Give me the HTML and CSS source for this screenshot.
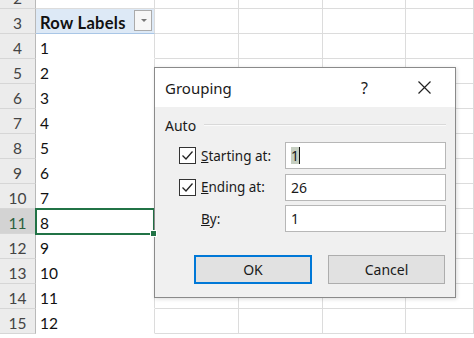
FILE: index.html
```html
<!DOCTYPE html>
<html lang="en">
<head>
    <meta charset="UTF-8">
    <title>Grouping</title>
    <link rel="stylesheet" href="styles.css">
</head>
<body>
    <div class="sheet">
        <div class="row"><div class="rh">2</div><div class="cell a"></div><div class="cell"></div><div class="cell"></div><div class="cell"></div><div class="cell"></div></div>
        <div class="row"><div class="rh">3</div><div class="cell a head">Row Labels<span class="drop"></span></div><div class="cell"></div><div class="cell"></div><div class="cell"></div><div class="cell"></div></div>
        <div class="row"><div class="rh">4</div><div class="cell a pv">1</div><div class="cell"></div><div class="cell"></div><div class="cell"></div><div class="cell"></div></div>
        <div class="row"><div class="rh">5</div><div class="cell a pv">2</div><div class="cell"></div><div class="cell"></div><div class="cell"></div><div class="cell"></div></div>
        <div class="row"><div class="rh">6</div><div class="cell a pv">3</div><div class="cell"></div><div class="cell"></div><div class="cell"></div><div class="cell"></div></div>
        <div class="row"><div class="rh">7</div><div class="cell a pv">4</div><div class="cell"></div><div class="cell"></div><div class="cell"></div><div class="cell"></div></div>
        <div class="row"><div class="rh">8</div><div class="cell a pv">5</div><div class="cell"></div><div class="cell"></div><div class="cell"></div><div class="cell"></div></div>
        <div class="row"><div class="rh">9</div><div class="cell a pv">6</div><div class="cell"></div><div class="cell"></div><div class="cell"></div><div class="cell"></div></div>
        <div class="row"><div class="rh">10</div><div class="cell a pv">7</div><div class="cell"></div><div class="cell"></div><div class="cell"></div><div class="cell"></div></div>
        <div class="row"><div class="rh sel">11</div><div class="cell a pv active">8</div><div class="cell"></div><div class="cell"></div><div class="cell"></div><div class="cell"></div></div>
        <div class="row"><div class="rh">12</div><div class="cell a pv">9</div><div class="cell"></div><div class="cell"></div><div class="cell"></div><div class="cell"></div></div>
        <div class="row"><div class="rh">13</div><div class="cell a pv">10</div><div class="cell"></div><div class="cell"></div><div class="cell"></div><div class="cell"></div></div>
        <div class="row"><div class="rh">14</div><div class="cell a pv">11</div><div class="cell"></div><div class="cell"></div><div class="cell"></div><div class="cell"></div></div>
        <div class="row"><div class="rh">15</div><div class="cell a pv">12</div><div class="cell"></div><div class="cell"></div><div class="cell"></div><div class="cell"></div></div>
    </div>

    <div class="dialog">
        <div class="titlebar">
            <span class="title">Grouping</span>
            <span class="help">?</span>
            <svg class="close" width="13" height="13" viewBox="0 0 13 13">
                <path d="M0.5 0.5 L12.5 12.5 M12.5 0.5 L0.5 12.5" stroke="#222" stroke-width="1.2" fill="none"/>
            </svg>
        </div>
        <div class="body">
            <div class="group">
                <span>Auto</span>
                <span class="rule"></span>
            </div>
            <div class="form">
                <span class="check"><svg width="17" height="17" viewBox="0 0 17 17"><path d="M3.5 8.5 L7 12 L13.5 4.5" stroke="#222" stroke-width="1.3" fill="none"/></svg></span>
                <label><u>S</u>tarting at:</label>
                <div class="field"><span class="selected">1</span><span class="caret"></span></div>

                <span class="check"><svg width="17" height="17" viewBox="0 0 17 17"><path d="M3.5 8.5 L7 12 L13.5 4.5" stroke="#222" stroke-width="1.3" fill="none"/></svg></span>
                <label><u>E</u>nding at:</label>
                <div class="field">26</div>

                <span></span>
                <label><u>B</u>y:</label>
                <div class="field">1</div>
            </div>
            <div class="buttons">
                <button class="btn default">OK</button>
                <button class="btn">Cancel</button>
            </div>
        </div>
    </div>
</body>
</html>
```

FILE: styles.css
```css
body {
    margin: 0;
    width: 474px;
    height: 338px;
    overflow: hidden;
    position: relative;
    background: #fff;
    font-family: Lato, 'Liberation Sans', sans-serif;
}
.sheet {
    margin-top: -16px;
}
.row {
    display: grid;
    grid-template-columns: 36px 119px 84px 84px 83px 68px;
    height: 25px;
}
.rh, .cell {
    box-sizing: border-box;
    height: 25px;
    padding-top: 3px;
    line-height: 22px;
    font-size: 15.5px;
}
.rh {
    background: #ececec;
    border-right: 1px solid #b9b9b9;
    border-bottom: 1px solid #d6d6d6;
    text-align: center;
    color: #444;
}
.rh.sel {
    background: #d3d3d3;
    color: #2c6040;
}
.cell {
    border-right: 1px solid #dcdcdc;
    border-bottom: 1px solid #dcdcdc;
    padding-left: 4px;
    color: #111;
}
.cell.pv {
    border-bottom-color: transparent;
}
.cell.head {
    position: relative;
    background: #dde9f6;
    border-bottom: 1px solid #a9c6e6;
    font-weight: bold;
    font-size: 16.5px;
    letter-spacing: 0.3px;
}
.drop {
    position: absolute;
    right: 2px;
    top: 1px;
    width: 18px;
    height: 21px;
    box-sizing: border-box;
    border: 1px solid #ababab;
    background: #f7f7f7;
}
.drop::after {
    content: '';
    position: absolute;
    left: 6px;
    top: 8px;
    border-left: 3px solid transparent;
    border-right: 3px solid transparent;
    border-top: 3px solid #777;
}
.cell.active {
    position: relative;
}
.cell.active::after {
    content: '';
    position: absolute;
    left: -1px;
    top: -1px;
    right: -1px;
    bottom: -2px;
    border: 2px solid #217346;
}
.cell.active::before {
    content: '';
    position: absolute;
    right: -3px;
    bottom: -4px;
    width: 5px;
    height: 5px;
    background: #217346;
    border: 1px solid #fff;
    z-index: 1;
}

/* dialog */
.dialog {
    position: absolute;
    left: 154px;
    top: 67px;
    width: 302px;
    height: 231px;
    box-sizing: border-box;
    border: 1px solid #8a8a8a;
    background: #f0f0f0;
    box-shadow: 1px 1px 4px rgba(0, 0, 0, 0.15);
    font-family: 'Noto Sans', 'Open Sans', sans-serif;
    font-size: 14px;
    color: #1a1a1a;
    display: flex;
    flex-direction: column;
}
.titlebar {
    height: 39px;
    background: #fff;
    display: flex;
    align-items: center;
    padding: 0 24px 0 10px;
}
.title {
    flex: 1;
    font-size: 15px;
}
.help {
    font-size: 16px;
    margin-right: 50px;
}
.body {
    flex: 1;
    padding: 9px 9px 0 10px;
}
.group {
    display: flex;
    align-items: center;
    height: 18px;
}
.rule {
    flex: 1;
    height: 1px;
    margin-left: 8px;
    background: #d9d9d9;
    border-bottom: 1px solid #fafafa;
}
.form {
    display: grid;
    grid-template-columns: 22px 1fr 161px;
    grid-auto-rows: 27px;
    row-gap: 4.5px;
    align-items: center;
    margin: 8px 0 0 14px;
}
.form label {
    font-size: 13.5px;
}
.check {
    width: 17px;
    height: 17px;
    box-sizing: border-box;
    border: 1px solid #333;
    background: #fff;
}
.check svg {
    display: block;
    margin: -1px;
}
.field {
    height: 27px;
    box-sizing: border-box;
    border: 1px solid #b7b7b7;
    background: #fff;
    padding-left: 5px;
    line-height: 25px;
    display: flex;
    align-items: center;
}
.selected {
    background: #c6cfc1;
    line-height: 17px;
}
.caret {
    width: 1px;
    height: 17px;
    background: #111;
}
.buttons {
    display: flex;
    justify-content: flex-end;
    gap: 16px;
    margin-top: 23px;
    padding-right: 1px;
}
.btn {
    width: 117px;
    height: 29px;
    box-sizing: border-box;
    border: 1px solid #adadad;
    background: #e1e1e1;
    font-family: 'Noto Sans', 'Open Sans', sans-serif;
    font-size: 14px;
    color: #1a1a1a;
}
.btn.default {
    width: 118px;
    border: 2px solid #0078d7;
}
```
